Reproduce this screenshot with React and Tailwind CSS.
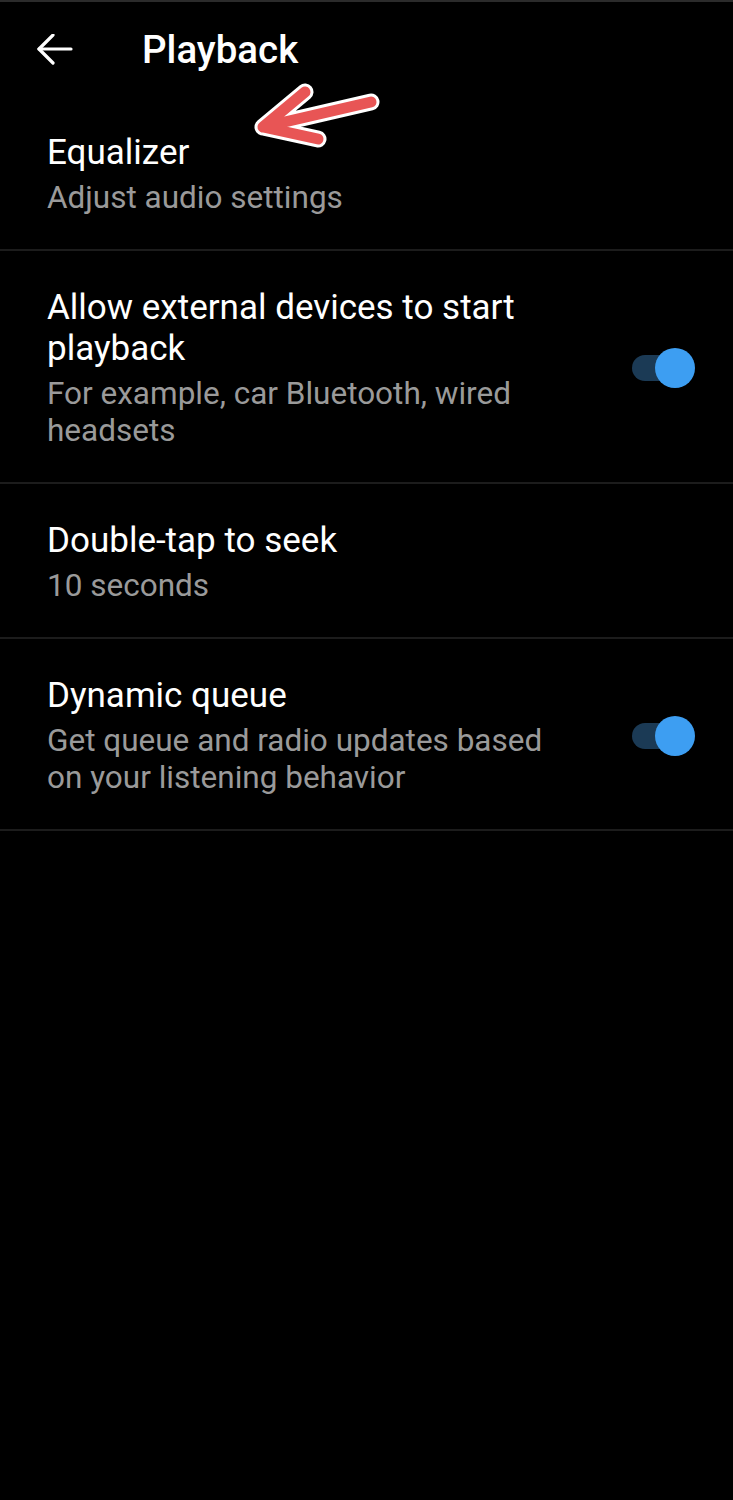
import React from 'react';

function Toggle() {
  return (
    <div className="relative w-[63px] h-[40px] flex items-center shrink-0">
      <div className="w-[58px] h-[26px] rounded-full bg-[#1b3a55]" />
      <div className="absolute right-0 top-0 w-[40px] h-[40px] rounded-full bg-[#3d9ef2]" />
    </div>
  );
}

function Row({ title, subtitle, toggle }) {
  return (
    <div className="flex items-center justify-between pl-[47px] pr-[38px] pt-[36px] pb-[33px] border-b-[2px] border-[#1c1c1c]">
      <div className="w-[525px]">
        <div className="text-[35px] leading-[41px] text-white">{title}</div>
        <div className="mt-[6px] text-[31.5px] leading-[37px] text-[#9a9a9a]">{subtitle}</div>
      </div>
      {toggle && <Toggle />}
    </div>
  );
}

export default function App() {
  return (
    <div className="relative w-[733px] h-[1500px] bg-black border-t-[2px] border-[#2b2b2b] font-['Roboto',sans-serif]">
      <div className="flex items-center h-[94px] pt-[2px] pl-[37px]">
        <svg width="36" height="32" viewBox="0 0 36 32" fill="none" stroke="white" strokeWidth="3.2" strokeLinecap="round" strokeLinejoin="round">
          <path d="M2 15 H34" />
          <path d="M16 1 L2 15 L16 29" />
        </svg>
        <h1 className="ml-[69px] text-[38.5px] font-medium text-white leading-none">Playback</h1>
      </div>

      <Row title="Equalizer" subtitle="Adjust audio settings" />
      <Row
        title="Allow external devices to start playback"
        subtitle="For example, car Bluetooth, wired headsets"
        toggle
      />
      <Row title="Double-tap to seek" subtitle="10 seconds" />
      <Row
        title="Dynamic queue"
        subtitle="Get queue and radio updates based on your listening behavior"
        toggle
      />

      <svg className="absolute left-0 top-0 pointer-events-none" width="733" height="200">
        <g fill="none" strokeLinecap="round" strokeLinejoin="round">
          <path d="M371 100 L263 125 M305 90 L263 125 L318 137" stroke="white" strokeWidth="17" />
          <path d="M371 100 L263 125 M305 90 L263 125 L318 137" stroke="#e85555" strokeWidth="11" />
        </g>
      </svg>
    </div>
  );
}
